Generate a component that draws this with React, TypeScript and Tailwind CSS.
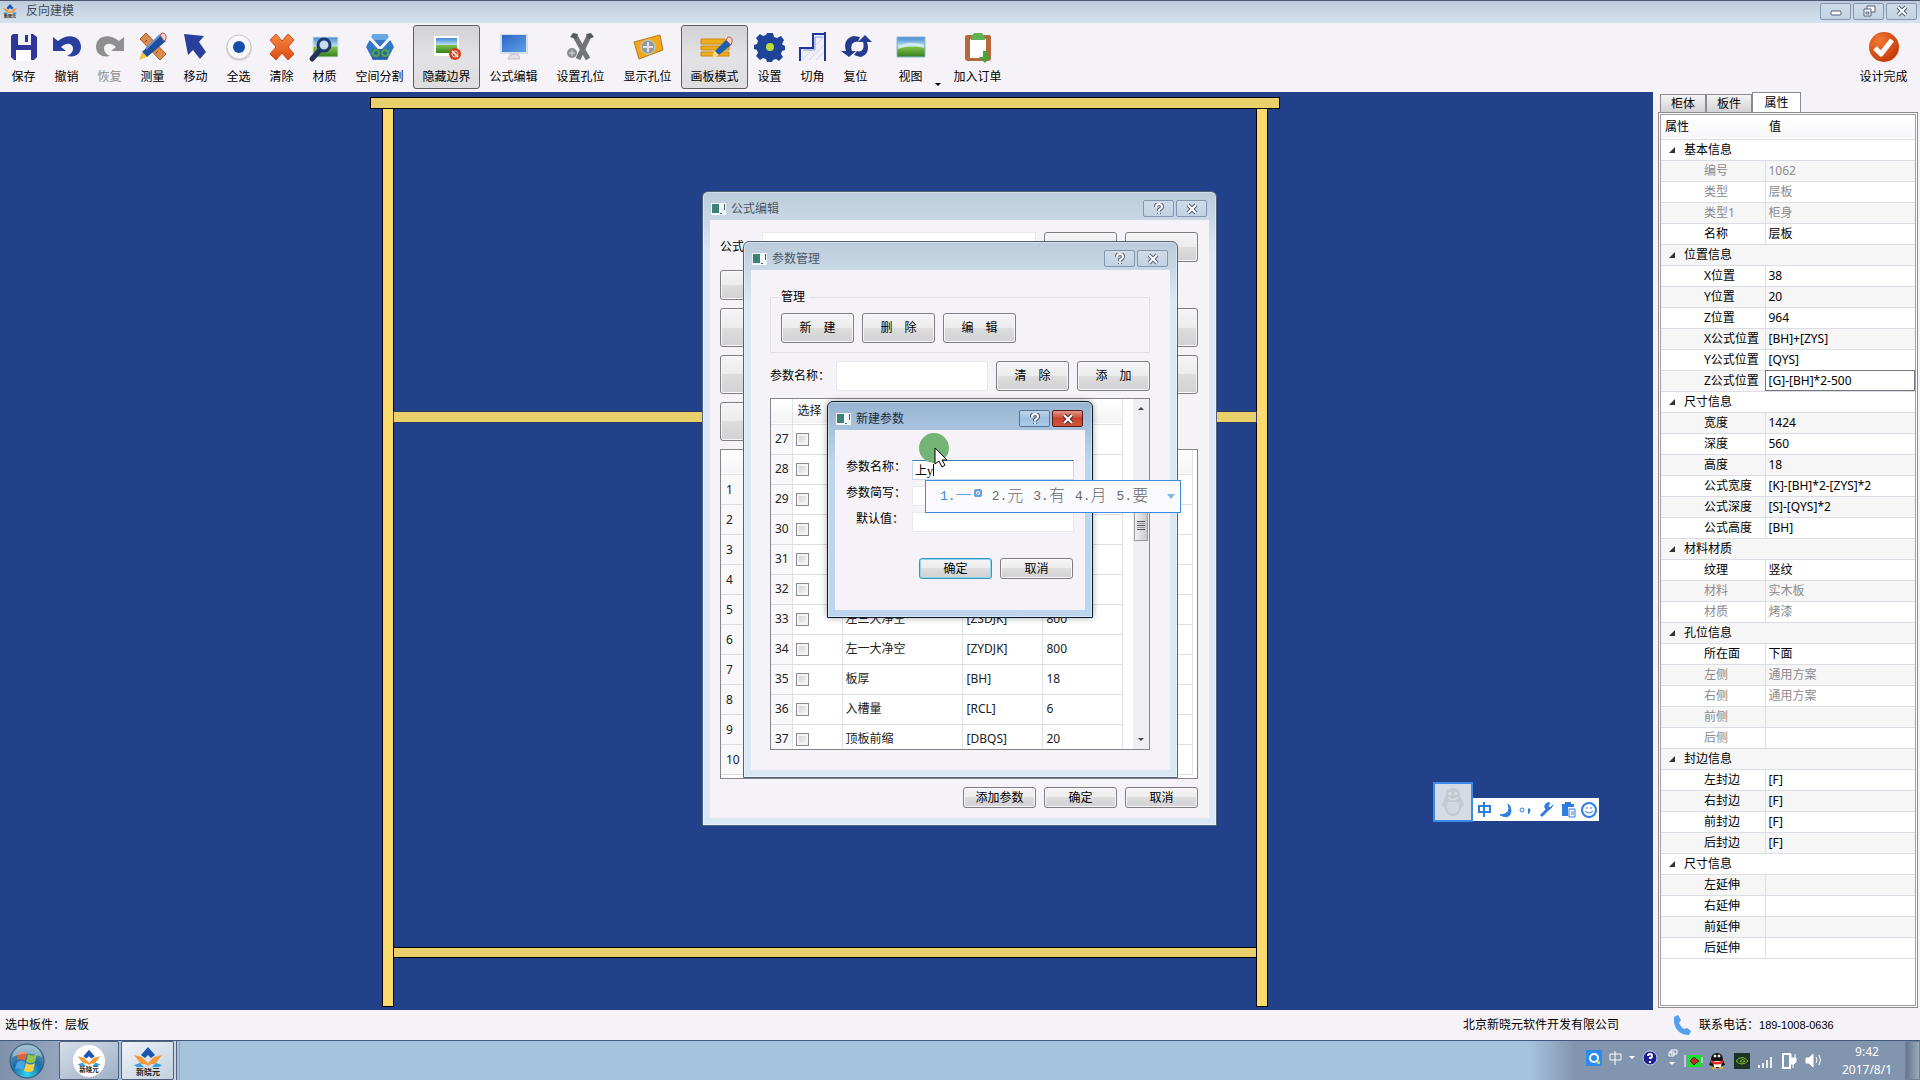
import React, { useState } from "react";

const BUTTON_FACE =
  "bg-[linear-gradient(to_bottom,#f5f4f6_0%,#ececec_50%,#dddddd_50%,#d2d1d3_100%)]";

// --- Toolbar icons (30x30 grid) ---
const icons: Record<string, React.ReactNode> = {
  save: (
    <>
      <path d="M4 2h20l4 3v20l-3 3H5l-3-3V4z" fill="#2f3698" />
      <path d="M9 1h13v12H9z" fill="#eef0fa" />
      <path d="M16 3h3v7h-3z" fill="#2f3698" />
      <path d="M7 18h15v11H7z" fill="#fff" />
    </>
  ),
  undo: (
    <path d="M1 5v14h13l-5-4c4-4 11-5 12 1 0 4-2 6-6 8 9 2 14-3 14-9C29 3 15 1 6 9z" fill="#2b3f9f" />
  ),
  redo: (
    <path d="M29 5v14H16l5-4c-4-4-11-5-12 1 0 4 2 6 6 8-9 2-14-3-14-9C1 3 15 1 24 9z" fill="#8f8f8f" />
  ),
  measure: (
    <>
      <path d="M2 7l6-6 20 21-6 6z" fill="#d98c4e" stroke="#a7602c" />
      <path d="M7 10l2-2m2 6 2-2m5 9 2-2" stroke="#8a4a1e" />
      <path d="M22 3l6 6L9 25l-5-5z" fill="#1e4f9e" />
      <path d="M8 17l14-14" stroke="#5f93dd" strokeWidth="2" />
      <path d="M22 3l2-2q5 0 4 6l-2 2z" fill="#e9d5d0" stroke="#c7574a" />
      <path d="M4 20l5 5-8 3z" fill="#f3c53f" />
    </>
  ),
  move: <path d="M3 2l20 2-5 6 7 10-6 7-7-9-5 5z" fill="#2a3f9c" />,
  select: (
    <>
      <circle cx="15" cy="16" r="13" fill="#d4d4d8" />
      <circle cx="15" cy="15" r="12" fill="#f8f8fa" stroke="#c8c8cc" />
      <circle cx="15" cy="15" r="6" fill="#164caa" />
    </>
  ),
  clear: (
    <path d="M3 8l6-6 6 7 6-7 6 6-6 7 6 7-6 6-6-7-6 7-6-6 6-7z" fill="url(#orange)" stroke="#cf4a14" />
  ),
  material: (
    <>
      <path d="M3 5h25v20H3z" fill="url(#landscape)" stroke="#d9e2e8" />
      <path d="M10 18l-8 9" stroke="#21315c" strokeWidth="5" strokeLinecap="round" />
      <circle cx="14" cy="13" r="6" fill="#cbe2f8" fillOpacity=".85" stroke="#20366d" strokeWidth="3" />
    </>
  ),
  split: (
    <>
      <path d="M8 2h14l7 13-7 13H8L1 15z" fill="#3477c6" />
      <path d="M8 2h14l3 6H5z" fill="#69a8e6" />
      <path d="M4 5l11 12M26 5 15 17" stroke="#f4f6fb" strokeWidth="3" />
      <path d="M7 17h16v10H7z" fill="#2c62a0" />
      <circle cx="11" cy="21" r="3" fill="none" stroke="#4fa64a" strokeWidth="2" />
      <circle cx="20" cy="21" r="3" fill="none" stroke="#4fa64a" strokeWidth="2" />
    </>
  ),
  hideEdge: (
    <>
      <path d="M2 4h25v20H2z" fill="#fff" />
      <path d="M4 6h21v15H4z" fill="url(#landscape)" />
      <circle cx="23" cy="22" r="6" fill="#cf3f1c" />
      <circle cx="23" cy="22" r="3" fill="none" stroke="#f6d9cf" />
      <path d="M20 19l6 6" stroke="#f6d9cf" strokeWidth="2" />
    </>
  ),
  formula: (
    <>
      <path d="M1 2h28v20H1z" fill="#d5dde9" />
      <path d="M3 3h24v17H3z" fill="url(#screen)" />
      <path d="M12 22h7l2 5H9z" fill="#e2dfe6" stroke="#c9bfca" />
    </>
  ),
  holes: (
    <>
      <path d="M9 4l13 23M23 4 12 27" stroke="#717478" strokeWidth="5" />
      <path d="M4 5l3-4 5 1-2 5zm24 0-3-4-5 1 2 5z" fill="#55585c" />
      <circle cx="6" cy="21" r="5" fill="#8b8e92" />
      <path d="M6 18v6M3 21h6" stroke="#dcdcdc" />
    </>
  ),
  showHoles: (
    <>
      <path d="M1 10 27 3l3 15-24 9z" fill="#f0a81e" stroke="#b87916" />
      <circle cx="15" cy="15" r="7" fill="#8e9aa0" stroke="#cfd2c8" />
      <path d="M15 10v10M10 15h10" stroke="#dfe5e6" strokeWidth="2" />
    </>
  ),
  board: (
    <>
      <path d="M1 7h24v5H1zm0 7h28v4H1zm0 6h28v4H1z" fill="#f0ac1c" stroke="#c88812" />
      <path d="M26 8l5 5-12 10-5-3z" fill="#1e5fae" />
      <path d="M26 8l2-3q5 0 4 5l-1 3z" fill="#ecd9d6" stroke="#c5503f" />
      <path d="M14 18l5 5-7 4z" fill="#f6d78c" />
    </>
  ),
  gear: (
    <>
      <path
        d="M12 1h6l1 4 3 1 4-2 3 4-2 4 1 1 2 1v4l-3 1-1 3 2 3-4 4-3-2-3 1-1 2h-5l-1-3-3-1-3 2-4-4 2-3-1-3-3-1v-4l3-1 1-3-2-3 4-4 3 2 3-1z"
        fill="#1f4399"
      />
      <circle cx="15" cy="15" r="4" fill="#bcdc35" />
    </>
  ),
  corner: (
    <>
      <path d="M2 15h14V2h11v26H2z" fill="#eef0f6" />
      <path d="M4 28l11-11M11 28l16-16M18 28l9-9M18 13l9-9" stroke="#d4d8e4" />
      <path d="M2 29V16h13V2h12m0-2v29" fill="none" stroke="#20369a" strokeWidth="2" />
      <path d="M5 18h12V5h8" fill="none" stroke="#7e9be0" />
    </>
  ),
  reset: (
    <>
      <path d="M0 19h5C2 10 7 5 13 4l6 1-2 5c-5-1-8 3-6 9h4l-7 6z" fill="#233c92" />
      <path d="M31 10h-5c3 9-1 14-7 15l-6-2 3-4c5 2 8-3 6-9h-5l7-7z" fill="#233c92" />
    </>
  ),
  view: (
    <>
      <path d="M1 5h28v20H1z" fill="url(#landscape)" stroke="#8fb5d2" />
      <path d="M2 14c9-4 17-4 26-1v3c-9-3-17-2-26 1z" fill="#d9f0f2" fillOpacity=".8" />
    </>
  ),
  order: (
    <>
      <path d="M4 3h22q2 0 2 3v20q0 3-3 3H5q-3 0-3-3V6q0-3 2-3z" fill="#b5683a" />
      <path d="M7 7h16v19H7z" fill="#fff" />
      <path d="M8 5l3-4h8l3 4v3H8z" fill="#62b054" />
      <path d="M20 19h4v5h4l-6 7-6-6h4z" fill="#49a23a" />
    </>
  ),
  done: (
    <>
      <circle cx="15" cy="15" r="15" fill="url(#done)" />
      <path d="M6 16l6 6L23 8" fill="none" stroke="#fff" strokeWidth="5" strokeLinejoin="round" />
    </>
  ),
};

const tools = [
  { icon: "save", label: "保存" },
  { icon: "undo", label: "撤销" },
  { icon: "redo", label: "恢复", disabled: true },
  { icon: "measure", label: "测量" },
  { icon: "move", label: "移动" },
  { icon: "select", label: "全选" },
  { icon: "clear", label: "清除" },
  { icon: "material", label: "材质" },
  { icon: "split", label: "空间分割", wide: true },
  { icon: "hideEdge", label: "隐藏边界", wide: true, pressed: true },
  { icon: "formula", label: "公式编辑", wide: true },
  { icon: "holes", label: "设置孔位", wide: true },
  { icon: "showHoles", label: "显示孔位", wide: true },
  { icon: "board", label: "画板模式", wide: true, pressed: true },
  { icon: "gear", label: "设置" },
  { icon: "corner", label: "切角" },
  { icon: "reset", label: "复位" },
  { icon: "view", label: "视图", wide: true, menu: true },
  { icon: "order", label: "加入订单", wide: true },
];

// [name, value, read-only]; one entry alone is a group heading
const properties: [string, string?, boolean?][] = [
  ["基本信息"],
  ["编号", "1062", true],
  ["类型", "层板", true],
  ["类型1", "柜身", true],
  ["名称", "层板"],
  ["位置信息"],
  ["X位置", "38"],
  ["Y位置", "20"],
  ["Z位置", "964"],
  ["X公式位置", "[BH]+[ZYS]"],
  ["Y公式位置", "[QYS]"],
  ["Z公式位置", "[G]-[BH]*2-500"],
  ["尺寸信息"],
  ["宽度", "1424"],
  ["深度", "560"],
  ["高度", "18"],
  ["公式宽度", "[K]-[BH]*2-[ZYS]*2"],
  ["公式深度", "[S]-[QYS]*2"],
  ["公式高度", "[BH]"],
  ["材料材质"],
  ["纹理", "竖纹"],
  ["材料", "实木板", true],
  ["材质", "烤漆", true],
  ["孔位信息"],
  ["所在面", "下面"],
  ["左侧", "通用方案", true],
  ["右侧", "通用方案", true],
  ["前侧", "", true],
  ["后侧", "", true],
  ["封边信息"],
  ["左封边", "[F]"],
  ["右封边", "[F]"],
  ["前封边", "[F]"],
  ["后封边", "[F]"],
  ["尺寸信息"],
  ["左延伸", ""],
  ["右延伸", ""],
  ["前延伸", ""],
  ["后延伸", ""],
];

const params = [
  { no: 27 },
  { no: 28 },
  { no: 29 },
  { no: 30 },
  { no: 31 },
  { no: 32 },
  { no: 33, name: "左三大净空", code: "[ZSDJK]", value: "800" },
  { no: 34, name: "左一大净空", code: "[ZYDJK]", value: "800" },
  { no: 35, name: "板厚", code: "[BH]", value: "18" },
  { no: 36, name: "入槽量", code: "[RCL]", value: "6" },
  { no: 37, name: "顶板前缩", code: "[DBQS]", value: "20" },
];

function Gradients() {
  return (
    <svg className="absolute size-0">
      <defs>
        <linearGradient id="orange" x1="0" y1="0" x2="0" y2="1">
          <stop offset="0" stopColor="#f58a45" />
          <stop offset="1" stopColor="#dd4a12" />
        </linearGradient>
        <linearGradient id="landscape" x1="0" y1="0" x2="0" y2="1">
          <stop offset="0" stopColor="#3f86cf" />
          <stop offset=".45" stopColor="#b8dff0" />
          <stop offset=".5" stopColor="#7fbf4b" />
          <stop offset="1" stopColor="#33801d" />
        </linearGradient>
        <linearGradient id="screen" x1="0" y1="0" x2="1" y2="1">
          <stop offset="0" stopColor="#2e66c6" />
          <stop offset="1" stopColor="#5fa0ea" />
        </linearGradient>
        <radialGradient id="done" cx=".35" cy=".3" r=".8">
          <stop offset="0" stopColor="#f47b35" />
          <stop offset="1" stopColor="#c03204" />
        </radialGradient>
        <radialGradient id="orb" cx=".5" cy=".9" r=".9">
          <stop offset="0" stopColor="#35d3f2" />
          <stop offset=".5" stopColor="#1a6da6" />
          <stop offset="1" stopColor="#7fa5b8" />
        </radialGradient>
      </defs>
    </svg>
  );
}

function Logo({ className }: { className: string }) {
  return (
    <svg viewBox="0 0 32 30" className={className}>
      <path d="M16 1l7 8-4 3-3-3-3 3-4-3z" fill="#1a56b0" />
      <path d="M2 9l8 2 6 6 6-6 8-2-7 9h-4l-3 2-3-2H9z" fill="#f09a3c" />
      <path d="M2 19l6-2 4 4H5zm28 0-6-2-4 4h7z" fill="#35a0dc" />
      <text x="16" y="29" fontSize="8" fontWeight="700" textAnchor="middle" fill="#222">
        新晓元
      </text>
    </svg>
  );
}

function ToolButton({ tool }: { tool: any }) {
  return (
    <button
      disabled={tool.disabled}
      className={`relative flex h-16 shrink-0 flex-col items-center gap-[7px] rounded-[3px] border pt-1.5 leading-4 ${
        tool.wide ? "w-[67px]" : "w-[43px]"
      } ${tool.pressed ? "border-[#5f5f63] bg-linear-to-b from-[#d2d1d4] via-[#e3e2e4] to-[#dddcde]" : "border-transparent"} ${
        tool.disabled ? "text-[#8c8c8c]" : "text-black"
      }`}
    >
      <svg viewBox="0 0 30 30" className="size-[30px] overflow-visible">
        {icons[tool.icon]}
      </svg>
      <span className="whitespace-nowrap">{tool.label}</span>
      {tool.menu && (
        <span className="absolute right-0.5 bottom-0.5 border-x-3 border-t-3 border-x-transparent border-t-black" />
      )}
    </button>
  );
}

function CaptionButton({ kind, tone = "plain" }: { kind: string; tone?: string }) {
  const tones: Record<string, string> = {
    plain: "border-[#8296b0] bg-linear-to-b from-[#cfdbe8] to-[#c3d2e3] text-[#52617a]",
    active: "border-[#55759c] bg-linear-to-b from-[#c0d5ec] via-[#9fbfe0] to-[#aacbe9] text-[#44546c]",
    danger: "border-[#5b1a1a] bg-linear-to-b from-[#e09a8c] via-[#c9402c] to-[#d0583c] text-[#5c2b2b]",
  };
  return (
    <button className={`flex h-[17px] w-[31px] items-center justify-center rounded-xs border ${tones[tone]}`}>
      <svg viewBox="0 0 14 12" className="h-3 w-3.5" stroke="currentColor" fill="none">
        {kind === "help" && (
          <>
            <path d="M4 4q0-3 3-3t3 3q0 1-3 3v1M7 10v1" strokeWidth="4" />
            <path d="M4 4q0-3 3-3t3 3q0 1-3 3v1M7 10v1" stroke="#fff" strokeWidth="2" />
          </>
        )}
        {kind === "close" && (
          <>
            <path d="M3 2l8 8M11 2l-8 8" strokeWidth="4" />
            <path d="M3 2l8 8M11 2l-8 8" stroke="#fff" strokeWidth="2" />
          </>
        )}
        {kind === "min" && <rect x="2" y="6" width="10" height="4" rx="1" fill="#fff" />}
        {kind === "restore" && (
          <>
            <path d="M5 1h8v6H5z" fill="#fff" />
            <path d="M2 4h7v7H2z" fill="#fff" />
            <path d="M4 7h3v2H4z" />
          </>
        )}
      </svg>
    </button>
  );
}

function Dialog({ title, active, className, children }: any) {
  return (
    <section
      className={`absolute flex flex-col rounded-t-md border ${
        active
          ? "border-[#101c2c] bg-linear-to-b from-[#98b4d2] to-[#bdd5ee] to-[60px] shadow-[inset_0_0_0_1px_rgba(255,255,255,0.4),0_0_6px_rgba(0,0,0,0.35)]"
          : "border-[#526278] bg-linear-to-b from-[#bccbdb] to-[#d9e8f4] to-[60px] shadow-[inset_0_0_0_1px_rgba(255,255,255,0.4)]"
      } ${className}`}
    >
      <header className="flex h-7 items-center gap-[5px] pt-[5px] pr-[9px] pl-2">
        <svg viewBox="0 0 15 12" className="h-3 w-[15px]">
          <path d="M0 0h15v12H0z" fill="#f4f7f8" />
          <path d="M1 1h7v9H1z" fill="#3e7f78" />
          <path d="M9 10h2v1H9zM13 1h1v6h-1z" fill="#44606c" />
        </svg>
        <h2 className={active ? "text-[#1d2b3c]" : "text-[#4b5866]"}>{title}</h2>
        <span className="ml-auto flex gap-0.5">
          <CaptionButton kind="help" tone={active ? "active" : "plain"} />
          <CaptionButton kind="close" tone={active ? "danger" : "plain"} />
        </span>
      </header>
      <div className="mx-[7px] mb-[7px] bg-[#f5f3f7]">{children}</div>
    </section>
  );
}

function PushButton({ children, className = "h-[30px]", primary }: any) {
  return (
    <button
      className={`w-[73px] shrink-0 rounded-[3px] border whitespace-pre text-black ${BUTTON_FACE} ${
        primary ? "border-[#3c93bd] shadow-[inset_0_0_0_1px_#8ed8f4]" : "border-[#7f7d82] shadow-[inset_0_0_0_1px_#f8f8f8]"
      } ${className}`}
    >
      {children}
    </button>
  );
}

const FIELD = "border border-[#e9e8ec] bg-white";

function FormulaDialog() {
  return (
    <Dialog title="公式编辑" className="top-[99px] left-[702px] w-[515px]">
      <div className="flex flex-col gap-2 pt-3 pr-[11px] pb-2.5 pl-2.5">
        <div className="flex h-[30px] items-center gap-2">
          <label htmlFor="formula" className="w-[34px] overflow-hidden whitespace-nowrap">
            公式:
          </label>
          <input id="formula" className={`h-full min-w-0 flex-1 ${FIELD}`} />
          <PushButton />
          <PushButton />
        </div>
        <PushButton />
        <div className="flex justify-between">
          <PushButton className="h-[39px]" />
          <PushButton className="h-[39px]" />
        </div>
        <div className="flex justify-between">
          <PushButton className="h-[39px]" />
          <PushButton className="h-[39px]" />
        </div>
        <PushButton className="h-[39px]" />
        <div className="h-[330px] overflow-hidden border border-[#86848a] bg-white">
          <table className="w-[472px] table-fixed text-[#222]">
            <thead>
              <tr className="h-6 border-b border-[#e2e1e6] bg-linear-to-b from-white to-[#f4f4f6]">
                <th className="w-8" />
                <th className="border-r border-[#e2e1e6]" />
              </tr>
            </thead>
            <tbody>
              {[1, 2, 3, 4, 5, 6, 7, 8, 9, 10].map((n) => (
                <tr key={n} className="h-[30px] border-b border-[#dddde2]">
                  <th className="bg-[#f8f8fa] pt-0.5 pl-[5px] text-left font-normal">{n}</th>
                  <td className="border-r border-[#e2e1e6]" />
                </tr>
              ))}
            </tbody>
          </table>
        </div>
        <div className="flex justify-end gap-2">
          <PushButton className="h-[21px]">添加参数</PushButton>
          <PushButton className="h-[21px]">确定</PushButton>
          <PushButton className="h-[21px]">取消</PushButton>
        </div>
      </div>
    </Dialog>
  );
}

function ParamDialog() {
  return (
    <Dialog title="参数管理" className="top-[149px] left-[743px] w-[435px]">
      <div className="pt-[19px] pr-5 pb-5 pl-[19px]">
        <fieldset className="border border-[#e2e1e6] px-2.5 pt-2 pb-[9px]">
          <legend className="pr-1 leading-4">管理</legend>
          <div className="flex gap-2">
            <PushButton>新　建</PushButton>
            <PushButton>删　除</PushButton>
            <PushButton>编　辑</PushButton>
          </div>
        </fieldset>
        <div className="mt-2 flex items-center gap-2">
          <label htmlFor="filter" className="w-[58px] whitespace-nowrap">
            参数名称：
          </label>
          <input id="filter" className={`h-[30px] min-w-0 flex-1 ${FIELD}`} />
          <PushButton>清　除</PushButton>
          <PushButton>添　加</PushButton>
        </div>
        <div className="mt-[7px] flex h-[352px] justify-between overflow-hidden border border-[#86848a] bg-white">
          <table className="w-[351px] table-fixed self-start text-[#222]">
            <colgroup>
              <col className="w-[21px]" />
              <col className="w-[50px]" />
              <col className="w-[120px]" />
              <col className="w-20" />
              <col className="w-20" />
            </colgroup>
            <thead>
              <tr className="h-[25px] border-b border-[#e2e1e6] bg-linear-to-b from-white to-[#f4f4f6]">
                <th className="border-r border-[#e2e1e6]" />
                <th className="pl-[5px] text-left font-normal">选择</th>
                <th />
                <th />
                <th className="border-r border-[#e2e1e6]" />
              </tr>
            </thead>
            <tbody>
              {params.map((p) => (
                <tr key={p.no} className="h-[30px] border-b border-[#dddde2]">
                  <th className="border-r border-[#e2e1e6] bg-[#f8f8fa] pl-1 text-left font-normal">{p.no}</th>
                  <td className="border-r border-[#e2e1e6] pl-[3px]">
                    <input
                      type="checkbox"
                      aria-label={`${p.no}`}
                      className="block size-[13px] appearance-none border border-[#8b8b8f] bg-linear-to-br from-[#c9c9cd] to-white shadow-[inset_0_0_0_2px_#f4f4f4] checked:bg-[#3c93bd]"
                    />
                  </td>
                  <td className="border-r border-[#e2e1e6] pl-[3px]">{p.name}</td>
                  <td className="border-r border-[#e2e1e6] pl-1">{p.code}</td>
                  <td className="border-r border-[#e2e1e6] pl-1">{p.value}</td>
                </tr>
              ))}
            </tbody>
          </table>
          <div className="flex w-4 flex-col items-center bg-[#efeef1] py-2">
            <span className="border-x-3 border-b-3 border-x-transparent border-b-[#444]" />
            <div className="mt-[70px] flex h-[61px] w-3.5 flex-col items-center justify-end gap-px border border-[#9b9a9f] bg-linear-to-r from-[#f2f2f2] to-[#c9c9cc] pb-2.5">
              <i className="h-px w-2 bg-[#555]" />
              <i className="h-px w-2 bg-[#999]" />
              <i className="h-px w-2 bg-[#555]" />
              <i className="h-px w-2 bg-[#999]" />
              <i className="h-px w-2 bg-[#555]" />
            </div>
            <span className="mt-auto border-x-3 border-t-3 border-x-transparent border-t-[#444]" />
          </div>
        </div>
      </div>
    </Dialog>
  );
}

function NewParamDialog() {
  const [name, setName] = useState("上y");

  return (
    <Dialog title="新建参数" active className="top-[309px] left-[827px] w-[266px]">
      <form className="px-[11px] pt-[30px] pb-[31px]" onSubmit={(e) => e.preventDefault()}>
        <div className="grid grid-cols-[60px_1fr] gap-x-1.5 gap-y-1.5 text-right leading-[14px]">
          <label htmlFor="p-name" className="w-[58px] whitespace-nowrap">
            参数名称：
          </label>
          <div className="relative">
            <input
              id="p-name"
              value={name}
              onChange={(e) => setName(e.target.value)}
              className="block h-5 w-full border border-[#c5daec] border-t-[#3d7bad] bg-white px-0.5 font-['Liberation_Serif','Noto_Sans_CJK_SC',serif] leading-[18px] text-black"
            />
            <span className="absolute top-1 left-[21px] h-3 w-px bg-black" />
          </div>
          <label htmlFor="p-code" className="w-[58px] whitespace-nowrap">
            参数简写：
          </label>
          <input id="p-code" className={`h-5 w-full ${FIELD}`} />
          <label htmlFor="p-value" className="w-[58px] whitespace-nowrap">
            默认值：
          </label>
          <input id="p-value" className={`h-5 w-full ${FIELD}`} />
        </div>
        <div className="mt-[26px] mr-px flex justify-end gap-2">
          <PushButton className="h-[21px]" primary>
            确定
          </PushButton>
          <PushButton className="h-[21px]">取消</PushButton>
        </div>
      </form>
    </Dialog>
  );
}

function CandidateBar() {
  return (
    <div className="absolute top-[388px] left-[925px] flex h-[33px] w-64 items-center gap-2.5 border border-[#3c8be0] bg-[#fafafc] pl-3.5 font-['Liberation_Mono','Noto_Sans_CJK_SC',monospace] text-base font-light whitespace-nowrap text-[#6a6a6e]">
      <span className="flex items-center text-[#3c8be0]">
        <span className="text-[13px]">1.</span>一
        <svg viewBox="0 0 9 9" className="mb-2 ml-0.5 size-2">
          <rect width="9" height="9" rx="2" fill="#6d9fd8" />
          <path d="M3 6V3h3v3M4 6h2" stroke="#fff" fill="none" />
        </svg>
      </span>
      {["元", "有", "月", "要"].map((word, i) => (
        <span key={word} className="flex items-center">
          <span className="text-[13px]">{i + 2}.</span>
          {word}
        </span>
      ))}
      <span className="mr-[5px] ml-auto border-x-4 border-t-5 border-x-transparent border-t-[#83b4ec]" />
    </div>
  );
}

function ImeBar() {
  return (
    <div className="absolute top-[690px] left-[1433px] flex items-end">
      <div className="flex size-10 items-center justify-center border-2 border-[#3f8ae6] bg-[#d5dbe5]">
        <svg viewBox="0 0 32 34" className="size-8">
          <path d="M16 2q8 0 8 10l4 8-3 3q-2 8-9 9-7-1-9-9l-3-3 4-8Q8 2 16 2z" fill="#c3c8d1" />
          <path d="M10 17h12q2 12-6 13-8-1-6-13z" fill="#d3d8e0" />
          <path d="M11 12q5 5 10 0" fill="none" stroke="#d8dce3" strokeWidth="2" />
          <circle cx="13" cy="8" r="2" fill="#d8dce3" />
          <circle cx="19" cy="8" r="2" fill="#d8dce3" />
        </svg>
      </div>
      <svg viewBox="0 0 126 23" className="mb-px h-[23px] w-[126px] bg-white" fill="none" stroke="#2d7ee0">
        <path d="M6 8h11v6H6zM11 4v15" strokeWidth="2" />
        <path d="M35 6q4 10-8 11 10 5 11-4 0-5-3-7z" fill="#2d7ee0" />
        <circle cx="49" cy="12" r="2" />
        <path d="M55 11l2 0q0 4-2 5" fill="#2d7ee0" />
        <path d="M68 18l7-7" strokeWidth="3" />
        <path d="M80 7l-3 3-2-2 2-3q-6-1-5 5 4 5 8-3z" fill="#2d7ee0" />
        <path d="M89 6h12v3h-6v9h-6z" fill="#2d7ee0" stroke="none" />
        <path d="M92 5h6" strokeWidth="2" />
        <path d="M96 11h6v8h-6zM98 14h3m-3 2h3" fill="#fff" />
        <circle cx="116" cy="12" r="7" strokeWidth="2" />
        <path d="M112 13q4 4 8 0M114 9v2M118 9v2" />
      </svg>
    </div>
  );
}

function Workspace() {
  return (
    <main className="relative min-w-0 flex-1 overflow-hidden bg-[#22418b]">
      {/* cabinet panels */}
      <svg className="absolute inset-0 size-full" fill="#fbdb6e" stroke="#000" shapeRendering="crispEdges">
        <rect x="370" y="5" width="909" height="11" fill="#e9d06b" />
        <rect x="382" y="16" width="11" height="898" />
        <rect x="1256" y="16" width="11" height="898" />
        <rect x="393" y="319" width="863" height="11" fill="#e9d06b" stroke="#2a3a60" />
        <rect x="393" y="855" width="863" height="10" fill="#e9d06b" />
      </svg>

      <FormulaDialog />
      <ParamDialog />
      <NewParamDialog />
      <CandidateBar />
      <ImeBar />

      {/* mouse pointer with click highlight */}
      <svg viewBox="0 0 36 40" className="absolute top-[341px] left-[919px] h-10 w-9">
        <circle cx="15" cy="15" r="15" fill="#74b577" />
        <path d="M16 15v16l4-3 3 6 3-2-3-5h5z" fill="#fff" stroke="#000" />
      </svg>
    </main>
  );
}

function PropertyPanel() {
  const tabs = ["柜体", "板件", "属性"];
  const [tab, setTab] = useState("属性");

  return (
    <aside className="flex w-[267px] shrink-0 flex-col bg-[#f5f3f7] pr-0.5 pb-0.5 pl-[5px]">
      <div className="flex h-5 items-end pl-0.5" role="tablist">
        {tabs.map((t) => (
          <button
            key={t}
            role="tab"
            aria-selected={t === tab}
            onClick={() => setTab(t)}
            className={`border border-b-0 border-[#8c8a90] ${
              t === tab ? "h-5 w-[49px] bg-white" : "h-[18px] w-[46px] bg-linear-to-b from-[#f3f3f4] to-[#d3d2d5]"
            }`}
          >
            {t}
          </button>
        ))}
      </div>
      <div className="flex-1 border border-[#8c8a90] bg-white p-px">
        <div className="h-full border border-[#a09ea4]">
          <table className="w-full table-fixed">
            <thead>
              <tr className="h-6 border-b border-[#dedee3] bg-linear-to-b from-white to-[#f7f7f9]">
                <th className="w-[104px] pl-1 text-left font-normal">属性</th>
                <th className="pl-1 text-left font-normal">值</th>
              </tr>
            </thead>
            <tbody>
              {properties.map(([name, value, readOnly], i) =>
                value === undefined ? (
                  <tr key={i} className="h-[21px] border-b border-[#dcdce4] even:bg-[#f6f6f7]">
                    <th colSpan={2} className="text-left leading-4 font-normal">
                      <span className="flex items-center gap-2 pl-[7px]">
                        <svg viewBox="0 0 8 8" className="size-2">
                          <path d="M7 1v6H1z" fill="#333" />
                        </svg>
                        {name}
                      </span>
                    </th>
                  </tr>
                ) : (
                  <tr
                    key={i}
                    className={`h-[21px] border-b border-[#dcdce4] even:bg-[#f6f6f7] ${readOnly ? "text-[#8b8b8f]" : ""}`}
                  >
                    <td className="border-r border-[#dcdce4] pl-[43px] leading-4 whitespace-nowrap">{name}</td>
                    <td
                      className={`pl-[3px] leading-4 whitespace-nowrap ${
                        name === "Z公式位置" ? "bg-white outline -outline-offset-1 outline-[#77757b]" : ""
                      }`}
                    >
                      {value}
                    </td>
                  </tr>
                )
              )}
            </tbody>
          </table>
        </div>
      </div>
    </aside>
  );
}

function Taskbar() {
  return (
    <footer className="flex h-10 shrink-0 border-t border-[#41597c] bg-[#a6c2dd] text-white">
      <div className="flex w-[59px] items-center bg-linear-to-r from-[#8091ab] to-[#93a6be] pl-[9px]">
        <button>
          <svg viewBox="0 0 36 36" className="size-9">
            <circle cx="18" cy="18" r="17" fill="url(#orb)" stroke="#35546e" />
            <path d="M9 10q4-3 9 0l-2 8q-4-3-8-1z" fill="#e2643a" />
            <path d="M19 11q4 3 9 0l-2 8q-4 2-9 0z" fill="#8fc647" />
            <path d="M8 19q4-3 8 0l-2 8q-4-3-8-1z" fill="#4aa3e4" />
            <path d="M17 20q4 3 9 0l-2 8q-4 2-9 0z" fill="#f8cf41" />
            <path d="M3 14Q6 2 18 2t15 12Q18 7 3 14z" fill="#fff" fillOpacity=".35" />
          </svg>
        </button>
      </div>
      <button className="flex w-[60px] items-center justify-center rounded-xs border border-[#4f6178] bg-linear-to-br from-[#d6dfea] to-[#9fb0c6]">
        <span className="flex size-8 items-center justify-center rounded-full bg-white">
          <Logo className="size-[26px]" />
        </span>
      </button>
      <button className="ml-0.5 flex w-[53px] items-center justify-center rounded-xs border border-[#4f6178] bg-linear-to-br from-[#eef2f7] to-[#c3d1e0]">
        <Logo className="size-8" />
      </button>
      <span className="w-[3px] border-r border-[#4f6178] bg-[#c8d4e2]" />
      <span className="w-[3px] border-r border-[#8ba2bc]" />

      <div className="ml-auto flex items-center bg-linear-to-r from-[#a6c2dd] to-[#8295ae] to-[45px] pl-[53px]">
        <svg viewBox="0 0 243 39" className="h-[39px] w-[243px]" fill="none" stroke="#fff">
          <rect x="3" y="9" width="16" height="16" rx="1" fill="#2b8cf0" stroke="none" />
          <circle cx="11" cy="17" r="4" strokeWidth="2" />
          <path d="M14 20h3v3h-3z" fill="#b4e34d" stroke="none" />
          <path d="M27 13h11v6H27zM32 10v14" />
          <path d="M46 15h6l-3 3z" fill="#fff" stroke="none" />
          <circle cx="67" cy="17" r="7" fill="#1c1f94" stroke="#c7cde4" />
          <path d="M65 15q0-2 2-2t2 2-2 2v1M67 20v2" strokeWidth="2" />
          <path d="M88 9h6v4h-6zM86 11h5v4h-5z" />
          <path d="M86 21h6l-3 3z" fill="#fff" stroke="none" />
          <path d="M104 14h14v12h-14z" fill="#19e030" stroke="none" />
          <path d="M107 20l2-2 2-2 2 2 3 2-3 2-2 2-2-2z" fill="#c3262c" stroke="#5e1c14" />
          <path d="M102 14v12M119 16v6" />
          <path d="M134 12q6 0 6 7l2 5-3 1q-5 4-10 0l-3-1 2-5q0-7 6-7z" fill="#111" stroke="none" />
          <path d="M130 20h9l-1 6h-7z" fill="#fff" stroke="none" />
          <path d="M128 19q6 4 12 0v3q-6 3-12 0z" fill="#e22a20" stroke="none" />
          <circle cx="132" cy="15" r="1" fill="#fff" />
          <circle cx="136" cy="15" r="1" fill="#fff" />
          <path d="M129 27h4m3 0h4" stroke="#f0a224" strokeWidth="2" />
          <path d="M151 12h16v16h-16z" fill="#1d3325" stroke="none" />
          <path d="M153 20q6-7 12 0-6 6-12 0zm4 0q3-3 5 0-3 3-5 0" stroke="#7cb928" />
          <path d="M175 24h2v3h-2zm4-2h2v5h-2zm4-3h2v8h-2zm4-3h2v11h-2z" fill="#e9edf4" stroke="none" />
          <path d="M200 13h7v14h-7z" strokeWidth="2" />
          <path d="M207 17h6v4l-2 2h-3l-1-2zM208 17v-4m4 4v-4M210 23v4" fill="#fff" />
          <path d="M223 17h3l4-4v13l-4-4h-3z" fill="#fff" />
          <path d="M233 16q2 3 0 6M236 14q3 5 0 10" />
        </svg>
        <time className="ml-[3px] w-[76px] text-center leading-[18px]">
          9:42
          <br />
          2017/8/1
        </time>
        <button className="h-full w-[15px] border border-[#6f8097] bg-linear-to-r from-[#66778d] to-[#9aaabd]" />
      </div>
    </footer>
  );
}

export default function App() {
  return (
    <div className="flex h-screen flex-col overflow-hidden bg-[#f5f3f7] font-['Noto_Sans','Noto_Sans_CJK_SC',sans-serif] text-xs text-black">
      <Gradients />

      {/* Title bar */}
      <header className="flex h-[23px] shrink-0 items-center border-t border-[#4b5770] bg-linear-to-b from-[#bccadb] to-[#d6e2ef] pr-[3px] pb-0.5 pl-0.5">
        <Logo className="size-4" />
        <h1 className="pl-2 text-[#3f4b5a]">反向建模</h1>
        <span className="ml-auto flex gap-0.5">
          <CaptionButton kind="min" />
          <CaptionButton kind="restore" />
          <CaptionButton kind="close" />
        </span>
      </header>

      {/* Toolbar */}
      <nav className="flex h-[69px] shrink-0 pt-0.5 pr-[3px] pl-0.5">
        {tools.map((tool) => (
          <ToolButton key={tool.icon} tool={tool} />
        ))}
        <span className="flex-1" />
        <ToolButton tool={{ icon: "done", label: "设计完成", wide: true }} />
      </nav>

      <div className="flex min-h-0 flex-1">
        <Workspace />
        <PropertyPanel />
      </div>

      {/* Status bar */}
      <div className="flex h-[30px] shrink-0 items-center pl-[5px]">
        <span>选中板件：层板</span>
        <span className="mr-[54px] ml-auto">北京新晓元软件开发有限公司</span>
        <span className="flex w-[247px] items-center gap-2">
          <svg viewBox="0 0 18 20" className="h-5 w-[18px]">
            <path d="M1 2l4-2 3 5-2 3q2 4 5 6l3-1 4 3-2 4Q4 20 1 8z" fill="#55a0ee" />
          </svg>
          <span>
            联系电话：<span className="font-['Liberation_Sans',sans-serif] text-[11px]">189-1008-0636</span>
          </span>
        </span>
      </div>

      <Taskbar />
    </div>
  );
}
